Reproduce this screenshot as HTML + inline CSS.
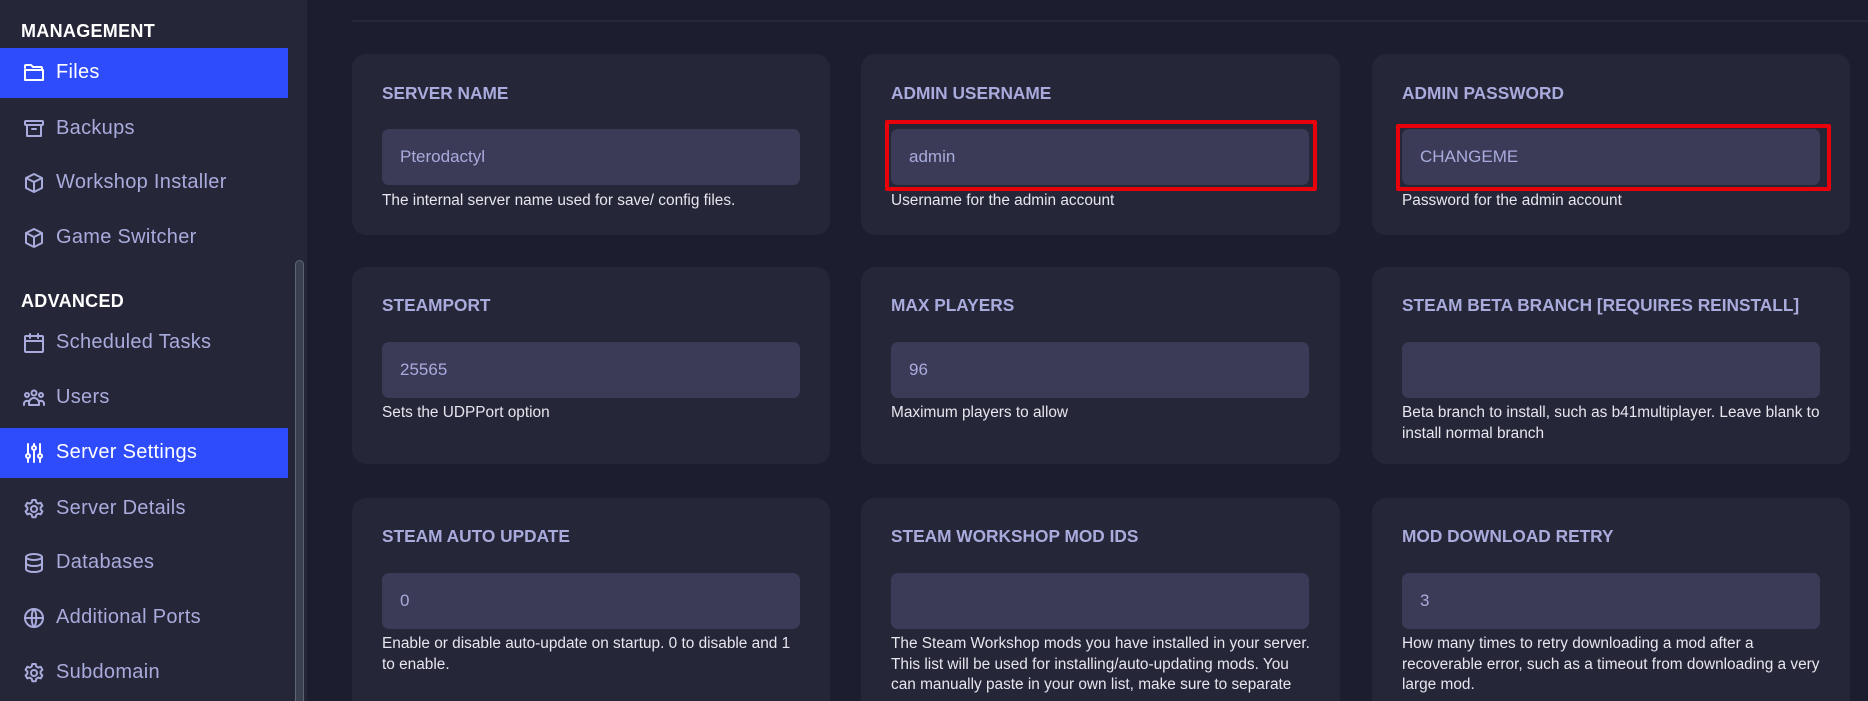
<!DOCTYPE html>
<html><head><meta charset="utf-8"><style>
*{margin:0;padding:0;box-sizing:border-box}
html{width:1868px;height:701px;overflow:hidden}
body{width:1868px;height:701px;overflow:hidden;background:#1c1d2f;font-family:"Liberation Sans",sans-serif;position:relative}
.sb{position:absolute;left:0;top:0;width:307px;height:701px;background:#262639}
.sec{position:absolute;left:21px;color:#fff;font-weight:bold;font-size:18px;letter-spacing:0.3px}
.it{position:absolute;left:0;width:288px;height:50px;color:#a9abdc;font-size:20px;letter-spacing:0.3px}
.it.on{background:#2e4bfc;color:#fff}
.it svg{position:absolute;left:22px;top:13px;width:24px;height:24px;fill:none;stroke:currentColor;stroke-width:2;stroke-linecap:round;stroke-linejoin:round}
.it span{position:absolute;left:56px;top:13px}
.scroll{position:absolute;left:295px;top:260px;width:9px;height:460px;border-radius:5px;background:#3a4050;border:1px solid #5c6670}
.line{position:absolute;left:352px;top:20px;width:1516px;height:2px;background:#26283a}
.card{position:absolute;background:#262639;border-radius:14px}
.lab{position:absolute;left:30px;font-size:17.3px;font-weight:bold;color:#a9abdc}
.inp{position:absolute;left:30px;width:418px;height:56px;background:#3b3b58;border-radius:7px;color:#a9abdc;font-size:17px;padding-left:18px;line-height:56px}
.help{position:absolute;left:30px;width:425px;color:#e6e6ee;font-size:15.4px;line-height:20.5px}
.red{position:absolute;border:4px solid #e8000b;border-radius:2px}
</style></head><body>
<div class="sb"></div>
<div class="sec" style="top:21px">MANAGEMENT</div>
<div class="it on" style="top:48px"><svg viewBox="0 0 24 24"><path d="M3 7V5a1 1 0 0 1 1-1h5l2 2h8a1 1 0 0 1 1 1v1M3 9h18v10H3z"/></svg><span>Files</span></div>
<div class="it" style="top:104px"><svg viewBox="0 0 24 24"><rect x="3" y="4" width="18" height="4" rx="1"/><path d="M5 8v11h14V8M10 12h4"/></svg><span>Backups</span></div>
<div class="it" style="top:158px"><svg viewBox="0 0 24 24"><path d="M12 3l8 4v10l-8 4-8-4V7zM4 7l8 4 8-4M12 11v10"/></svg><span>Workshop Installer</span></div>
<div class="it" style="top:213px"><svg viewBox="0 0 24 24"><path d="M12 3l8 4v10l-8 4-8-4V7zM4 7l8 4 8-4M12 11v10"/></svg><span>Game Switcher</span></div>
<div class="sec" style="top:291px">ADVANCED</div>
<div class="it" style="top:318px"><svg viewBox="0 0 24 24"><rect x="3" y="5" width="18" height="16" rx="1"/><path d="M3 10h18M8 3v4M16 3v4"/></svg><span>Scheduled Tasks</span></div>
<div class="it" style="top:373px"><svg viewBox="0 0 24 24"><circle cx="12" cy="7" r="2.5"/><circle cx="5" cy="9" r="2"/><circle cx="19" cy="9" r="2"/><path d="M7 19v-2a5 5 0 0 1 10 0v2zM2 19v-1a3 3 0 0 1 4-3M22 19v-1a3 3 0 0 0-4-3"/></svg><span>Users</span></div>
<div class="it on" style="top:428px"><svg viewBox="0 0 24 24"><path d="M6 3v10M6 17v4M12 3v2M12 9v12M18 3v10M18 17v4"/><circle cx="6" cy="15" r="2"/><circle cx="12" cy="7" r="2"/><circle cx="18" cy="15" r="2"/></svg><span>Server Settings</span></div>
<div class="it" style="top:484px"><svg viewBox="0 0 24 24"><circle cx="12" cy="12" r="3"/><path d="M10.3 3h3.4l.6 2.5 2 1.1 2.4-.8 1.7 3-1.8 1.7v2.2l1.8 1.7-1.7 3-2.4-.8-2 1.1-.6 2.5h-3.4l-.6-2.5-2-1.1-2.4.8-1.7-3 1.8-1.7v-2.2L3.6 8.8l1.7-3 2.4.8 2-1.1z"/></svg><span>Server Details</span></div>
<div class="it" style="top:538px"><svg viewBox="0 0 24 24"><ellipse cx="12" cy="6" rx="8" ry="3"/><path d="M4 6v12c0 1.7 3.6 3 8 3s8-1.3 8-3V6M4 12c0 1.7 3.6 3 8 3s8-1.3 8-3"/></svg><span>Databases</span></div>
<div class="it" style="top:593px"><svg viewBox="0 0 24 24"><circle cx="12" cy="12" r="9"/><path d="M3 12h18M12 3c-3 3-3 15 0 18M12 3c3 3 3 15 0 18"/></svg><span>Additional Ports</span></div>
<div class="it" style="top:648px"><svg viewBox="0 0 24 24"><circle cx="12" cy="12" r="3"/><path d="M10.3 3h3.4l.6 2.5 2 1.1 2.4-.8 1.7 3-1.8 1.7v2.2l1.8 1.7-1.7 3-2.4-.8-2 1.1-.6 2.5h-3.4l-.6-2.5-2-1.1-2.4.8-1.7-3 1.8-1.7v-2.2L3.6 8.8l1.7-3 2.4.8 2-1.1z"/></svg><span>Subdomain</span></div>
<div class="scroll"></div>
<div class="line"></div>

<div class="card" style="left:352px;top:54px;width:478px;height:181px"><div class="lab" style="top:29px">SERVER NAME</div><div class="inp" style="top:75px">Pterodactyl</div><div class="help" style="top:137px">The internal server name used for save/ config files.</div></div>
<div class="card" style="left:861px;top:54px;width:479px;height:181px"><div class="lab" style="top:29px">ADMIN USERNAME</div><div class="inp" style="top:75px">admin</div><div class="help" style="top:137px">Username for the admin account</div></div>
<div class="card" style="left:1372px;top:54px;width:478px;height:181px"><div class="lab" style="top:29px">ADMIN PASSWORD</div><div class="inp" style="top:75px">CHANGEME</div><div class="help" style="top:137px">Password for the admin account</div></div>
<div class="red" style="left:885px;top:120px;width:432px;height:71px"></div>
<div class="red" style="left:1396px;top:124px;width:435px;height:67px"></div>

<div class="card" style="left:352px;top:267px;width:478px;height:197px"><div class="lab" style="top:28px">STEAMPORT</div><div class="inp" style="top:75px">25565</div><div class="help" style="top:136px">Sets the UDPPort option</div></div>
<div class="card" style="left:861px;top:267px;width:479px;height:197px"><div class="lab" style="top:28px">MAX PLAYERS</div><div class="inp" style="top:75px">96</div><div class="help" style="top:136px">Maximum players to allow</div></div>
<div class="card" style="left:1372px;top:267px;width:478px;height:197px"><div class="lab" style="top:28px">STEAM BETA BRANCH [REQUIRES REINSTALL]</div><div class="inp" style="top:75px"></div><div class="help" style="top:136px">Beta branch to install, such as b41multiplayer. Leave blank to install normal branch</div></div>

<div class="card" style="left:352px;top:498px;width:478px;height:230px"><div class="lab" style="top:28px">STEAM AUTO UPDATE</div><div class="inp" style="top:75px">0</div><div class="help" style="top:136px">Enable or disable auto-update on startup. 0 to disable and 1 to enable.</div></div>
<div class="card" style="left:861px;top:498px;width:479px;height:230px"><div class="lab" style="top:28px">STEAM WORKSHOP MOD IDS</div><div class="inp" style="top:75px"></div><div class="help" style="top:136px">The Steam Workshop mods you have installed in your server. This list will be used for installing/auto-updating mods. You can manually paste in your own list, make sure to separate</div></div>
<div class="card" style="left:1372px;top:498px;width:478px;height:230px"><div class="lab" style="top:28px">MOD DOWNLOAD RETRY</div><div class="inp" style="top:75px">3</div><div class="help" style="top:136px">How many times to retry downloading a mod after a recoverable error, such as a timeout from downloading a very large mod.</div></div>
</body></html>
